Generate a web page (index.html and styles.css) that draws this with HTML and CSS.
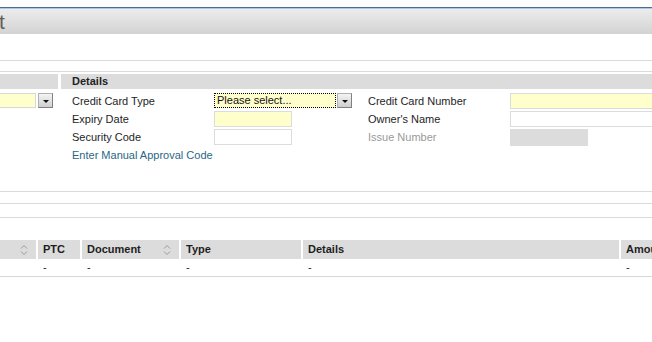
FILE: index.html
```html
<!DOCTYPE html>
<html>
<head>
<meta charset="utf-8">
<link rel="stylesheet" href="styles.css">
</head>
<body>
<div class="page">
  <div class="top"></div>
  <div class="titlebar"><span class="title">t</span></div>
  <div class="rule r1"></div>
  <div class="rule r2"></div>

  <div class="sechead">
    <div class="sh-left"></div>
    <div class="sh-details">Details</div>
  </div>

  <div class="form">
    <div class="leftcol">
      <div class="row row1">
        <div class="select left-select">
          <div class="sel-box yellow"></div>
          <div class="sel-btn"><span class="tri"></span></div>
        </div>
      </div>
    </div>
    <div class="details">
      <div class="row row1">
        <div class="lbl">Credit Card Type</div>
        <div class="fld">
          <div class="select">
            <div class="sel-box yellow focus">Please select...</div>
            <div class="sel-btn"><span class="tri"></span></div>
          </div>
        </div>
        <div class="lbl">Credit Card Number</div>
        <div class="fld"><div class="input yellow wide"></div></div>
      </div>
      <div class="row">
        <div class="lbl">Expiry Date</div>
        <div class="fld"><div class="input yellow short"></div></div>
        <div class="lbl">Owner's Name</div>
        <div class="fld"><div class="input wide"></div></div>
      </div>
      <div class="row">
        <div class="lbl">Security Code</div>
        <div class="fld"><div class="input short"></div></div>
        <div class="lbl disabled">Issue Number</div>
        <div class="fld"><div class="input grey short"></div></div>
      </div>
      <div class="row">
        <div class="lbl link">Enter Manual Approval Code</div>
      </div>
    </div>
  </div>

  <div class="rule r3"></div>
  <div class="rule r4"></div>
  <div class="rule r5"></div>

  <div class="table">
    <div class="thead">
      <div class="th c1"><svg class="sort" width="8" height="12" viewBox="0 0 8 12"><polyline points="1,4.5 4,1.5 7,4.5" fill="none" stroke="#9a9a9a" stroke-width="1"/><polyline points="1,7.5 4,10.5 7,7.5" fill="none" stroke="#9a9a9a" stroke-width="1"/></svg></div>
      <div class="th c2">PTC</div>
      <div class="th c3">Document<svg class="sort" width="8" height="12" viewBox="0 0 8 12"><polyline points="1,4.5 4,1.5 7,4.5" fill="none" stroke="#9a9a9a" stroke-width="1"/><polyline points="1,7.5 4,10.5 7,7.5" fill="none" stroke="#9a9a9a" stroke-width="1"/></svg></div>
      <div class="th c4">Type</div>
      <div class="th c5">Details</div>
      <div class="th c6">Amount</div>
    </div>
    <div class="trow">
      <div class="td c1"></div>
      <div class="td c2">-</div>
      <div class="td c3">-</div>
      <div class="td c4">-</div>
      <div class="td c5">-</div>
      <div class="td c6">-</div>
    </div>
  </div>
</div>
</body>
</html>
```

FILE: styles.css
```css
html, body {
  margin: 0;
  padding: 0;
  background: #fff;
  overflow: hidden;
}
body {
  font-family: "Liberation Sans", Arial, sans-serif;
  font-size: 11px;
  color: #1e1e1e;
}
.page {
  width: 652px;
  height: 342px;
  overflow: hidden;
}
.top {
  height: 7px;
  background: #fdfdfd;
}
.titlebar {
  height: 26px;
  border-top: 1px solid #4a6c96;
  box-shadow: inset 0 1px 0 #b4c6dc;
  background: linear-gradient(#ededed, #d3d3d3);
  display: flex;
  align-items: center;
  overflow: hidden;
}
.title {
  font-size: 21px;
  color: #5e5e5e;
  margin-left: -1px;
  line-height: 26px;
  padding-top: 1px;
}
.rule {
  height: 0;
  border-top: 1px solid #dadada;
}
.r1 { margin-top: 26px; }
.r2 { margin-top: 10px; }
.r3 { margin-top: 27px; }
.r4 { margin-top: 11px; }
.r5 { margin-top: 13px; }

.sechead {
  margin-top: 2px;
  display: flex;
  gap: 3px;
  height: 15px;
}
.sh-left {
  width: 58px;
  flex-shrink: 0;
  background: #dcdcdc;
}
.sh-details {
  flex: 1;
  background: #dcdcdc;
  font-weight: bold;
  padding-left: 11px;
  line-height: 15px;
  color: #222;
}

.form {
  margin-top: 2px;
  display: flex;
  gap: 3px;
}
.leftcol {
  width: 58px;
  flex-shrink: 0;
}
.details {
  flex: 1;
  min-width: 0;
  padding-left: 11px;
}
.row {
  display: grid;
  grid-template-columns: 142px 154px 142px 1fr;
  align-items: center;
  height: 18px;
}
.row.row1 {
  height: 19px;
}
.leftcol .row {
  display: flex;
}
.lbl {
  white-space: nowrap;
  color: #1e1e1e;
}
.lbl.disabled { color: #9a9a9a; }
.lbl.link { color: #2a6785; grid-column: 1 / span 2; }

.fld {
  min-width: 0;
}
.select {
  display: flex;
  align-items: center;
  gap: 1px;
}
.left-select {
  gap: 2px;
}
.sel-box {
  height: 15px;
  box-sizing: border-box;
  line-height: 13px;
  padding-left: 2px;
  width: 122px;
  border: 1px solid #d8d8d8;
  color: #111;
}
.left-select .sel-box {
  width: 36px;
  border-left: none;
}
.sel-box.focus {
  border: 1px dotted #000;
}
.sel-btn {
  width: 15px;
  height: 15px;
  flex-shrink: 0;
  box-sizing: border-box;
  border: 1px solid #b0b0b0;
  border-right-color: #808080;
  border-bottom-color: #808080;
  background: linear-gradient(#f4f4f4, #cfcfcf);
  display: flex;
  align-items: center;
  justify-content: center;
}
.tri {
  width: 0;
  height: 0;
  border-left: 3px solid transparent;
  border-right: 3px solid transparent;
  border-top: 3px solid #111;
  margin-top: 1px;
}
.input {
  height: 16px;
  box-sizing: border-box;
  border: 1px solid #dcdcdc;
  background: #fff;
}
.input.short { width: 78px; }
.input.wide { width: 160px; }
.yellow { background: #ffffcc; }
.input.grey {
  background: #dcdcdc;
  border-color: #dcdcdc;
  height: 17px;
}

.table {
  margin-top: 22px;
  width: 720px;
}
.thead, .trow {
  display: grid;
  grid-template-columns: 36px 42px 97px 120px 316px 100px;
  column-gap: 2px;
}
.thead {
  height: 19px;
}
.th {
  background: #dcdcdc;
  font-weight: bold;
  color: #1e1e1e;
  line-height: 19px;
  padding-left: 5px;
  position: relative;
  white-space: nowrap;
}
.th.c1 { padding-left: 0; }
.sort {
  position: absolute;
  top: 4px;
  right: 8px;
}
.trow {
  height: 17px;
  border-bottom: 1px solid #d8d8d8;
}
.td {
  line-height: 17px;
  padding-left: 5px;
  color: #1e1e1e;
}
```
